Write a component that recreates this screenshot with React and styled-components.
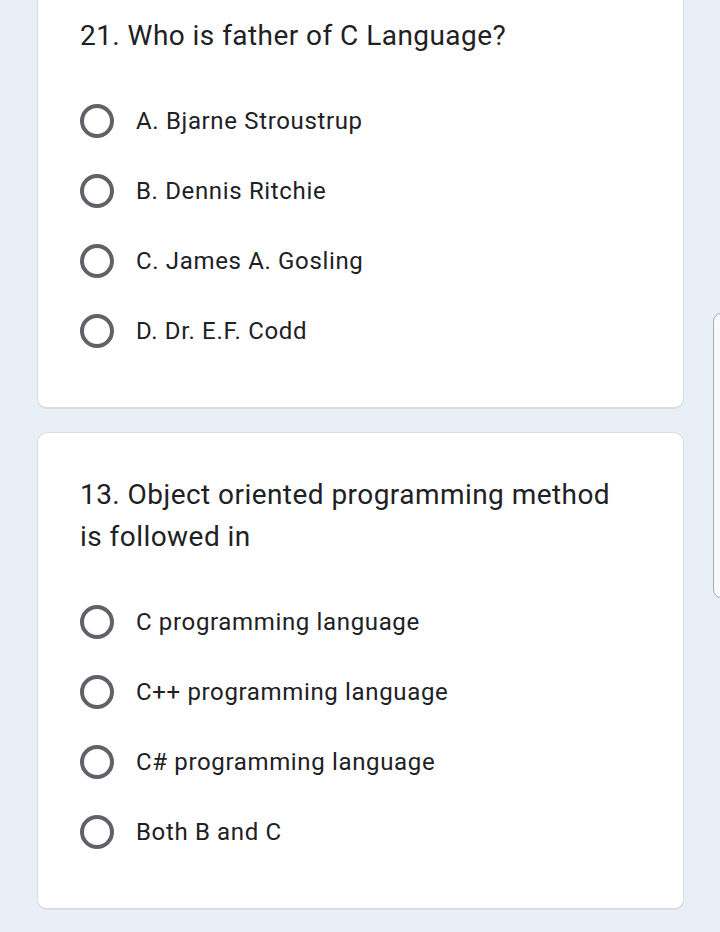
import React from "react";
import styled, { createGlobalStyle } from "styled-components";

const questions = [
  {
    id: 21,
    title: "21. Who is father of C Language?",
    options: ["A. Bjarne Stroustrup", "B. Dennis Ritchie", "C. James A. Gosling", "D. Dr. E.F. Codd"],
    cut: true,
  },
  {
    id: 13,
    title: "13. Object oriented programming method is followed in",
    options: ["C programming language", "C++ programming language", "C# programming language", "Both B and C"],
  },
];

const App = () => {
  return (
    <>
      <Global />
      <Page>
        {questions.map((q) => (
          <Card key={q.id} $cut={q.cut}>
            <Title>{q.title}</Title>
            <Options>
              {q.options.map((opt) => (
                <Option key={opt}>
                  <Radio />
                  <OptionText>{opt}</OptionText>
                </Option>
              ))}
            </Options>
          </Card>
        ))}
        <Card $stub />
      </Page>
      <SideHandle />
    </>
  );
};

export default App;

const Global = createGlobalStyle`
html, body {
  margin: 0;
  padding: 0;
  background: #e9eff6;
  font-family: Roboto, "Liberation Sans", sans-serif;
  overflow: hidden;
}
`;

const Page = styled.div`
  display: flex;
  flex-direction: column;
  gap: 23px;
  padding: 0 36px 0 37px;
  height: 932px;
`;

const Card = styled.div`
  flex-shrink: 0;
  background: #fff;
  border: 1px solid #dadce0;
  border-bottom-width: 2px;
  border-radius: 10px;
  padding: 41px 42px 41px 42px;
  ${(p) =>
    p.$cut &&
    `
    border-top: none;
    border-top-left-radius: 0;
    border-top-right-radius: 0;
    padding-top: 15px;
  `}
  ${(p) =>
    p.$stub &&
    `
    height: 40px;
    padding: 0;
  `}
`;

const Title = styled.div`
  font-size: 28px;
  line-height: 42px;
  color: #202124;
  letter-spacing: 0.45px;
  padding-right: 16px;
`;

const Options = styled.div`
  display: flex;
  flex-direction: column;
  margin-top: 29px;
`;

const Option = styled.div`
  display: flex;
  align-items: center;
  height: 70px;
  gap: 22px;
`;

const Radio = styled.span`
  box-sizing: border-box;
  width: 34px;
  height: 34px;
  border-radius: 50%;
  border: 4px solid #5f6368;
  flex-shrink: 0;
`;

const OptionText = styled.span`
  font-size: 24px;
  color: #202124;
  letter-spacing: 0.65px;
`;

const SideHandle = styled.div`
  position: fixed;
  left: 713px;
  top: 313px;
  width: 20px;
  height: 285px;
  box-sizing: border-box;
  border: 1px solid #a8abb0;
  border-radius: 8px;
  background: #f7f9fc;
`;
